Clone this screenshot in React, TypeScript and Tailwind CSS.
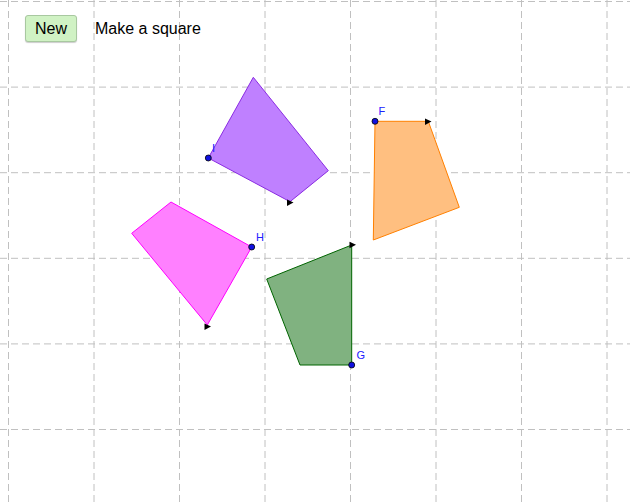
import React from "react";

const xs = [0, 1, 2, 3, 4, 5, 6, 7].map((i) => 8.5 + 85.5 * i);
const ys = [0, 1, 2, 3, 4, 5].map((j) => 1.5 + 85.6 * j);

function Arrow({ x, y }: { x: number; y: number }) {
  return <polygon points={`${x - 3},${y - 3} ${x + 3.5},${y} ${x - 3},${y + 3.5}`} fill="#000" />;
}

function Pt({ x, y }: { x: number; y: number }) {
  return <circle cx={x} cy={y} r={3} fill="#1010e0" stroke="#000" strokeWidth={0.8} />;
}

function Label({ x, y, t }: { x: number; y: number; t: string }) {
  return (
    <text x={x} y={y} fill="#2020ff" fontSize={11} fontFamily="'Liberation Sans', Arial, sans-serif">
      {t}
    </text>
  );
}

export default function App() {
  return (
    <div className="relative w-[630px] h-[503px] bg-white overflow-hidden">
      <svg className="absolute inset-0" width={630} height={503} viewBox="0 0 630 503">
        {xs.map((x) => (
          <line key={"v" + x} x1={x} y1={0} x2={x} y2={503} stroke="#c0c0c0" strokeWidth={1} strokeDasharray="7 4" />
        ))}
        {ys.map((y) => (
          <line key={"h" + y} x1={0} y1={y} x2={630} y2={y} stroke="#c0c0c0" strokeWidth={1} strokeDasharray="7 4" />
        ))}

        {/* purple */}
        <polygon points="208.3,158 253.3,77.3 328.3,170.7 290,201.7" fill="#bf80ff" stroke="#8a2be2" strokeWidth={1} />
        <Arrow x={290} y={202.5} />
        <Pt x={208.3} y={158} />
        <Label x={212} y={152} t="I" />

        {/* orange */}
        <polygon points="375,121.3 428.3,121.3 459.3,207.3 373.3,240" fill="#ffbf80" stroke="#ff8000" strokeWidth={1} />
        <Arrow x={428} y={121.5} />
        <Pt x={375} y={121.3} />
        <Label x={378.5} y={115} t="F" />

        {/* pink */}
        <polygon points="171,202 131.7,233.3 207.3,325 251.7,247" fill="#ff80ff" stroke="#ff00ff" strokeWidth={1} />
        <Arrow x={207.5} y={326.5} />
        <Pt x={251.7} y={247} />
        <Label x={256} y={240.7} t="H" />

        {/* green */}
        <polygon points="351.7,245 266.7,279 300,365 351.7,365" fill="#80b280" stroke="#006400" strokeWidth={1} />
        <Arrow x={352.5} y={244.7} />
        <Pt x={351.7} y={365} />
        <Label x={356.5} y={359.3} t="G" />
      </svg>

      <div className="absolute left-[25px] top-[15px] flex items-center gap-[18px] font-['Liberation_Sans',Arial,sans-serif] text-[16px] text-black">
        <button className="w-[52px] h-[27px] rounded-[3px] border border-[#a8c8a0] bg-[#d0f2c4] shadow-[0_1px_1px_rgba(0,0,0,0.2)] flex items-center justify-center leading-none">
          New
        </button>
        <span className="leading-none pt-[1px]">Make a square</span>
      </div>
    </div>
  );
}
